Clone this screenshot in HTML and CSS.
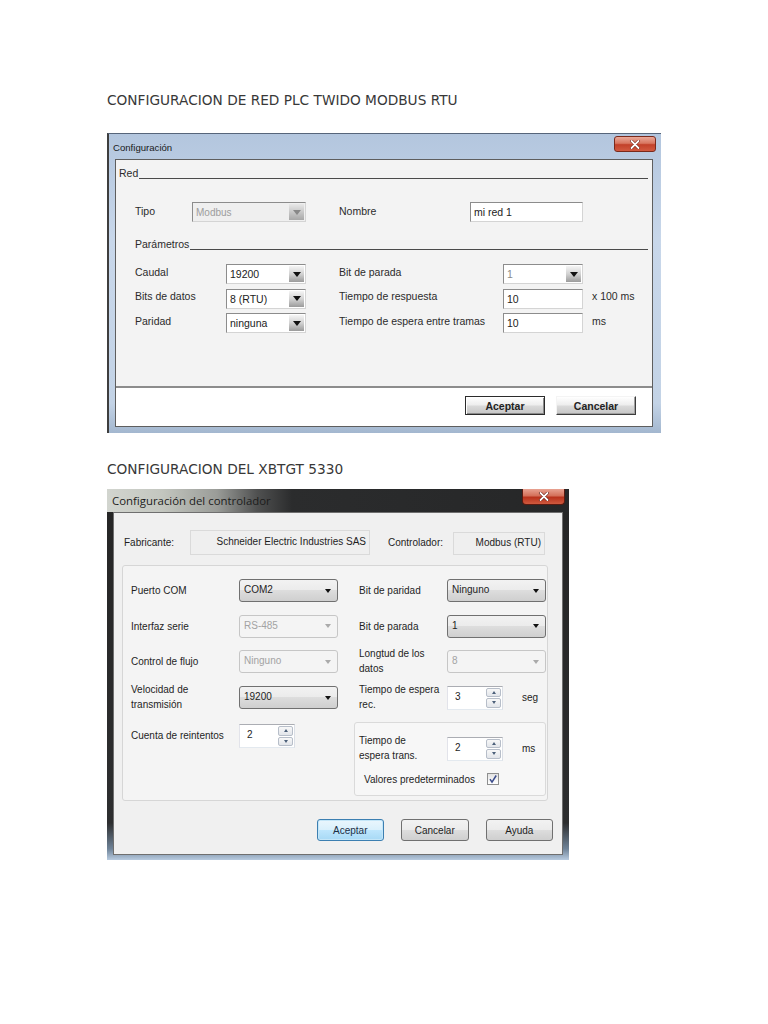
FILE: index.html
```html
<!DOCTYPE html>
<html lang="es">
<head>
    <meta charset="UTF-8">
    <title>Configuracion de red</title>
    <link rel="stylesheet" href="styles.css">
</head>
<body>
<div class="page">
    <p class="heading">CONFIGURACION DE RED PLC TWIDO MODBUS RTU</p>

    <div class="win1">
        <div class="win1-title">
            <span class="win1-name">Configuración</span>
            <span class="close1">
                <svg width="12" height="9" viewBox="0 0 12 9"><path d="M2.5 1L9.5 8M9.5 1L2.5 8" stroke="#6b1d10" stroke-width="3" stroke-linecap="round"/><path d="M2.5 1L9.5 8M9.5 1L2.5 8" stroke="#fff" stroke-width="1.8" stroke-linecap="round"/></svg>
            </span>
        </div>
        <div class="win1-client">
            <div class="win1-body">
                <div class="sect">Red</div>
                <div class="tipo-row">
                    <span class="tipo-lbl">Tipo</span>
                    <span class="combo1 disabled w114"><span class="val">Modbus</span><span class="arr"></span></span>
                    <span class="nombre-lbl">Nombre</span>
                    <span class="text1 w113">mi red 1</span>
                </div>
                <div class="sect sect-params">Parámetros</div>
                <div class="params">
                    <span class="plbl">Caudal</span>
                    <span class="combo1"><span class="val">19200</span><span class="arr"></span></span>
                    <span class="plbl lbl2">Bit de parada</span>
                    <span class="combo1"><span class="val grey">1</span><span class="arr"></span></span>
                    <span></span>

                    <span class="plbl">Bits de datos</span>
                    <span class="combo1"><span class="val">8 (RTU)</span><span class="arr"></span></span>
                    <span class="plbl lbl2">Tiempo de respuesta</span>
                    <span class="text1">10</span>
                    <span class="plbl unit">x 100 ms</span>

                    <span class="plbl">Paridad</span>
                    <span class="combo1"><span class="val">ninguna</span><span class="arr"></span></span>
                    <span class="plbl lbl2">Tiempo de espera entre tramas</span>
                    <span class="text1">10</span>
                    <span class="plbl unit">ms</span>
                </div>
            </div>
            <div class="win1-footer">
                <span class="btn1 default">Aceptar</span>
                <span class="btn1">Cancelar</span>
            </div>
        </div>
    </div>

    <p class="heading heading-2">CONFIGURACION DEL XBTGT 5330</p>

    <div class="win2">
        <div class="win2-title">
            <span class="win2-name">Configuración del controlador</span>
            <span class="close2">
                <svg width="12" height="9" viewBox="0 0 12 9"><path d="M2.5 1L9.5 8M9.5 1L2.5 8" stroke="#5e1509" stroke-width="3" stroke-linecap="round"/><path d="M2.5 1L9.5 8M9.5 1L2.5 8" stroke="#fff" stroke-width="1.8" stroke-linecap="round"/></svg>
            </span>
        </div>
        <div class="win2-body">
            <div class="maker-row">
                <span class="maker-lbl">Fabricante:</span>
                <span class="ro-box ro-wide">Schneider Electric Industries SAS</span>
                <span class="ctrl-lbl">Controlador:</span>
                <span class="ro-box ro-narrow">Modbus (RTU)</span>
            </div>

            <div class="group">
                <span>Puerto COM</span>
                <span class="combo2"><span class="val">COM2</span><span class="arr2"></span></span>
                <span class="lbl3">Bit de paridad</span>
                <span class="combo2"><span class="val">Ninguno</span><span class="arr2"></span></span>

                <span>Interfaz serie</span>
                <span class="combo2 disabled"><span class="val">RS-485</span><span class="arr2"></span></span>
                <span class="lbl3">Bit de parada</span>
                <span class="combo2"><span class="val">1</span><span class="arr2"></span></span>

                <span>Control de flujo</span>
                <span class="combo2 disabled"><span class="val">Ninguno</span><span class="arr2"></span></span>
                <span class="lbl3 two">Longtud de los<br>datos</span>
                <span class="combo2 disabled"><span class="val">8</span><span class="arr2"></span></span>

                <span class="two">Velocidad de<br>transmisión</span>
                <span class="combo2"><span class="val">19200</span><span class="arr2"></span></span>
                <span class="lbl3 two">Tiempo de espera<br>rec.</span>
                <span class="spin-cell">
                    <span class="spin"><span class="num">3</span><span class="spin-btns"><span class="sb up"></span><span class="sb down"></span></span></span>
                    <span class="unit2">seg</span>
                </span>

                <span class="top-cell retry-lbl">Cuenta de reintentos</span>
                <span class="top-cell">
                    <span class="spin"><span class="num">2</span><span class="spin-btns"><span class="sb up"></span><span class="sb down"></span></span></span>
                </span>
                <div class="inner">
                    <div class="inner-row">
                        <span class="inner-lbl two">Tiempo de<br>espera trans.</span>
                        <span class="spin"><span class="num">2</span><span class="spin-btns"><span class="sb up"></span><span class="sb down"></span></span></span>
                        <span class="unit2">ms</span>
                    </div>
                    <div class="chk-row">
                        <span class="chk-lbl">Valores predeterminados</span>
                        <span class="chk">
                            <svg width="10" height="10" viewBox="0 0 10 10"><path d="M2 5.2L4 8.2L8.2 1.5" fill="none" stroke="#3b4c8c" stroke-width="1.5"/></svg>
                        </span>
                    </div>
                </div>
            </div>

            <div class="btns2">
                <span class="btn2 default">Aceptar</span>
                <span class="btn2">Cancelar</span>
                <span class="btn2">Ayuda</span>
            </div>
        </div>
    </div>
</div>
</body>
</html>
```

FILE: styles.css
```css
body {
    margin: 0;
    background-color: #fff;
    font-family: "Liberation Sans", Arial, sans-serif;
}
.page {
    padding: 92px 0 40px 107px;
}
.heading {
    margin: 0;
    font-family: "DejaVu Sans", sans-serif;
    font-size: 13.7px;
    line-height: 16px;
    color: #383838;
}
.heading-2 {
    margin-top: 28px;
}

/* first dialog: Twido "Configuración" */
.win1 {
    margin-top: 25px;
    width: 554px;
    height: 300px;
    box-sizing: border-box;
    border-top: 1px solid #56657a;
    border-left: 2px solid #3e3e3e;
    padding: 0 8px 6px 6px;
    background: linear-gradient(#b3c6de, #c8d7ea 35%, #c3d3e6 90%, #a3b7cf);
    display: flex;
    flex-direction: column;
}
.win1-title {
    height: 25px;
    flex: none;
    display: flex;
    justify-content: space-between;
    align-items: center;
    font-size: 9.6px;
    color: #1a1a1a;
}
.win1-name {
    margin-left: -2px;
    margin-top: 2px;
}
.close1 {
    align-self: flex-start;
    width: 42px;
    height: 16px;
    margin: 2px -3px 0 0;
    box-sizing: border-box;
    border: 1px solid #7a2a1c;
    border-radius: 3px;
    background: linear-gradient(#eaa999, #d87660 45%, #c2412a 55%, #d25a40);
    display: flex;
    align-items: center;
    justify-content: center;
}
.win1-client {
    flex: 1;
    border: 1px solid #5e5e5e;
    background-color: #f3f3f3;
    display: flex;
    flex-direction: column;
}
.win1-body {
    flex: 1;
    padding: 7px 4px 0 3px;
    font-size: 10.5px;
    color: #2b2b2b;
}
.sect {
    display: flex;
    align-items: flex-end;
    line-height: 12px;
}
.sect::after {
    content: "";
    flex: 1;
    border-bottom: 1px solid #4a4a4a;
    margin-left: 1px;
}
.sect-params {
    margin: 16px 0 0 16px;
}
.tipo-row {
    display: flex;
    align-items: center;
    height: 20px;
    margin-top: 23px;
    padding-left: 16px;
}
.tipo-lbl {
    width: 57px;
    margin-bottom: 3px;
}
.nombre-lbl {
    width: 131px;
    margin: 0 0 3px 33px;
}
.w114 { width: 114px; }
.w113 { width: 113px; }
.params {
    display: grid;
    grid-template-columns: 91px 80px 197px 80px auto;
    grid-auto-rows: 20px;
    row-gap: 4.5px;
    margin-top: 14px;
    padding-left: 16px;
    align-items: center;
}
.plbl {
    margin-bottom: 5px;
}
.lbl2 {
    padding-left: 33px;
}
.unit {
    padding-left: 9px;
}
.combo1,
.text1 {
    display: flex;
    align-items: center;
    height: 20px;
    box-sizing: border-box;
    background-color: #fff;
    border: 1px solid;
    border-color: #8c8c8c #d4d4d4 #d4d4d4 #8c8c8c;
    padding-left: 3px;
    color: #222;
}
.combo1 .val {
    flex: 1;
}
.combo1 .val.grey {
    color: #8a8a8a;
}
.combo1 .arr {
    width: 15px;
    align-self: stretch;
    margin: 1px;
    background: linear-gradient(#f5f5f5, #d2d2d2 50%, #9b9b9b);
    display: flex;
    align-items: center;
    justify-content: center;
}
.combo1 .arr::after {
    content: "";
    border-left: 4px solid transparent;
    border-right: 4px solid transparent;
    border-top: 5px solid #111;
}
.combo1.disabled {
    background-color: #efefef;
    color: #9d9d9d;
    font-size: 10px;
}
.combo1.disabled .arr {
    background: linear-gradient(#e8e8e8, #c8c8c8 50%, #a8a8a8);
}
.combo1.disabled .arr::after {
    border-top-color: #888;
}
.win1-footer {
    height: 40px;
    flex: none;
    box-sizing: border-box;
    background-color: #fff;
    border-top: 2px solid #8c8c8c;
    display: flex;
    justify-content: flex-end;
    align-items: center;
    gap: 11px;
    padding: 0 16px 3px 0;
}
.btn1 {
    width: 80px;
    height: 19px;
    box-sizing: border-box;
    display: flex;
    align-items: center;
    justify-content: center;
    font-weight: bold;
    font-size: 10.5px;
    color: #222;
    background: linear-gradient(#ffffff, #eeeeee 45%, #d9d9d9 55%, #c6c6c6);
    border: 1px solid;
    border-color: #f4f4f4 #3d3d3d #3d3d3d #f4f4f4;
    box-shadow: inset -1px -1px #a0a0a0;
}
.btn1.default {
    border-color: #2b2b2b;
    box-shadow: inset 1px 1px #fff, inset -1px -1px #8a8a8a;
}

/* second dialog: "Configuración del controlador" */
.win2 {
    margin-top: 12px;
    width: 462px;
    height: 371px;
    box-sizing: border-box;
    padding: 0 6px 5px 6px;
    background: linear-gradient(#252525, #2d2e2f 90%, #6f8398 97%, #b8cbe0);
    display: flex;
    flex-direction: column;
}
.win2-title {
    height: 23px;
    flex: none;
    margin: 0 -6px;
    padding-left: 5px;
    display: flex;
    justify-content: space-between;
    align-items: flex-start;
    background: linear-gradient(90deg, #d2d5cf, #c3c6bf 55px, #9a9c98 110px, #505151 150px, #2b2c2d 185px, #262728);
}
.win2-name {
    font-family: "Open Sans", sans-serif;
    font-size: 11.4px;
    line-height: 23px;
    color: #1c1c1c;
}
.close2 {
    width: 43px;
    height: 16px;
    margin-right: 4px;
    box-sizing: border-box;
    border: 1px solid #5a1a10;
    border-top: none;
    border-radius: 0 0 4px 4px;
    background: linear-gradient(#e8a291, #d4705a 45%, #b9321c 55%, #cf5a3f);
    display: flex;
    align-items: center;
    justify-content: center;
}
.win2-body {
    flex: 1;
    background-color: #f0f0f0;
    border: 1px solid #6f6f6f;
    padding: 17px 9px 0 10px;
    font-size: 10px;
    color: #1e1e1e;
    display: flex;
    flex-direction: column;
}
.maker-row {
    display: flex;
    align-items: center;
    height: 25px;
}
.maker-lbl {
    width: 66px;
}
.ro-box {
    height: 25px;
    box-sizing: border-box;
    background-color: #efefef;
    border: 1px solid #dadada;
    display: flex;
    align-items: center;
    justify-content: flex-end;
    padding: 0 3px 3px;
}
.ro-wide {
    width: 180px;
}
.ctrl-lbl {
    margin-left: 18px;
    width: 65px;
}
.ro-narrow {
    width: 92px;
    height: 23px;
    align-self: flex-end;
}
.group {
    margin: 10px 0 0 -2px;
    width: 426px;
    box-sizing: border-box;
    border: 1px solid #d6d6d6;
    border-radius: 3px;
    background-color: #f4f4f4;
    padding: 13px 0 4px 8px;
    display: grid;
    grid-template-columns: 108px 99px 109px 99px;
    grid-template-rows: 23px 23px 23px 24px auto;
    row-gap: 12.5px;
    align-items: center;
}
.lbl3 {
    padding-left: 21px;
}
.two {
    line-height: 14.5px;
}
.combo2 {
    height: 23px;
    box-sizing: border-box;
    border: 1px solid #707070;
    border-radius: 3px;
    background: linear-gradient(#f2f2f2, #ebebeb 50%, #dddddd 50%, #cfcfcf);
    display: flex;
    align-items: center;
    padding: 0 6px 2px 4px;
    color: #1e1e1e;
}
.combo2 .val {
    flex: 1;
}
.arr2 {
    border-left: 3.5px solid transparent;
    border-right: 3.5px solid transparent;
    border-top: 4px solid #111;
    margin-top: 2px;
}
.combo2.disabled {
    border-color: #c6c6c6;
    background: #f4f4f4;
    color: #a3a3a3;
}
.combo2.disabled .arr2 {
    border-top-color: #aaa;
}
.spin-cell {
    display: flex;
    align-items: center;
}
.unit2 {
    margin-left: 19px;
}
.top-cell {
    align-self: start;
    margin-top: 2px;
}
.retry-lbl {
    line-height: 24px;
}
.spin {
    width: 56px;
    height: 24px;
    box-sizing: border-box;
    background-color: #fff;
    border: 1px solid;
    border-color: #abadb3 #dbdfe6 #e3e9ef #e2e3ea;
    display: flex;
    padding: 1px;
}
.spin .num {
    flex: 1;
    padding: 2px 0 0 6px;
    line-height: 14px;
}
.spin-btns {
    width: 15px;
    display: flex;
    flex-direction: column;
    gap: 1px;
}
.sb {
    flex: 1;
    border: 1px solid #b7bec9;
    border-radius: 2px;
    background: linear-gradient(#f8f8f8, #e2e5ea);
    display: flex;
    align-items: center;
    justify-content: center;
}
.sb::after {
    content: "";
    border-left: 2.5px solid transparent;
    border-right: 2.5px solid transparent;
}
.sb.up::after {
    border-bottom: 3px solid #4c607a;
}
.sb.down::after {
    border-top: 3px solid #4c607a;
}
.inner {
    grid-column: 3 / 5;
    margin-left: 16px;
    height: 74px;
    box-sizing: border-box;
    border: 1px solid #dadada;
    border-radius: 3px;
    background-color: #f7f7f7;
    padding: 11px 0 0 4px;
}
.inner-row {
    display: flex;
    align-items: center;
}
.inner-lbl {
    width: 88px;
}
.chk-row {
    display: flex;
    align-items: center;
    margin-top: 10px;
    padding-left: 5px;
}
.chk-lbl {
    width: 123px;
}
.chk {
    width: 12px;
    height: 12px;
    box-sizing: border-box;
    border: 1px solid #8e8f8f;
    background: linear-gradient(#e3e3e3, #fff);
    display: flex;
    align-items: center;
    justify-content: center;
}
.btns2 {
    display: flex;
    justify-content: flex-end;
    gap: 17px;
    margin-top: 18px;
}
.btn2 {
    width: 67.5px;
    height: 22px;
    box-sizing: border-box;
    border: 1px solid #707070;
    border-radius: 3px;
    background: linear-gradient(#f2f2f2, #ebebeb 50%, #dddddd 50%, #cfcfcf);
    display: flex;
    align-items: center;
    justify-content: center;
    font-size: 10px;
    color: #1e1e1e;
}
.btn2.default {
    border-color: #3c7fb1;
    background: linear-gradient(#eaf6fd, #d9f0fc 50%, #bee6fd 50%, #a7d9f5);
    box-shadow: inset 0 0 0 1px #c4e6f8;
    color: #1c2f45;
}
```
